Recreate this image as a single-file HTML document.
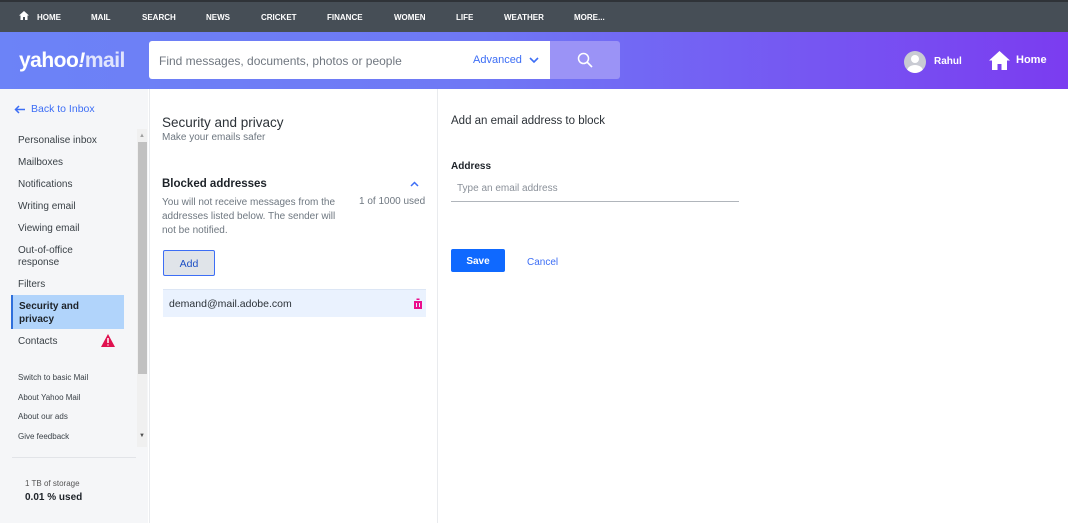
<!DOCTYPE html>
<html><head><style>
*{margin:0;padding:0;box-sizing:border-box}
body{width:1068px;height:523px;overflow:hidden;font-family:"Liberation Sans",sans-serif;background:#fff;position:relative;color:#232a31}
.top{position:absolute;left:0;top:0;width:1068px;height:32px;background:#464e56;border-top:2px solid #2f3338}
.top span{position:absolute;top:11px;color:#fff;font-size:8px;font-weight:bold}
.hdr{position:absolute;left:0;top:32px;width:1068px;height:57px;background:linear-gradient(90deg,#6c83f7 0%,#6f78f5 45%,#7b3cf0 100%)}
.abs{position:absolute}
.side{position:absolute;left:0;top:89px;width:148px;height:434px;background:#f5f6f8}
.side .it{position:absolute;left:18px;font-size:10px;color:#3a4147}
.side .sm{position:absolute;left:18px;font-size:8px;color:#3a4147}
.mid{position:absolute;left:149px;top:89px;width:289px;height:434px;border-left:1px solid #e9ebee;border-right:1px solid #e9ebee;background:#fff}
</style></head><body>
<div class="top">
<svg class="abs" style="left:19px;top:9px" width="10" height="9" viewBox="0 0 10 9"><path d="M5 0L0 4.5h1.5V9h2.5V6h2v3h2.5V4.5H10z" fill="#fff"/></svg>
<span style="left:37px">HOME</span><span style="left:91px">MAIL</span><span style="left:142px">SEARCH</span><span style="left:206px">NEWS</span><span style="left:261px">CRICKET</span><span style="left:327px">FINANCE</span><span style="left:394px">WOMEN</span><span style="left:456px">LIFE</span><span style="left:504px">WEATHER</span><span style="left:574px">MORE...</span>
</div>
<div class="hdr">
<div class="abs" style="left:19px;top:17px;color:#fff;font-size:21px;font-weight:bold;letter-spacing:-0.5px">yahoo<span style="font-style:italic">!</span><span style="opacity:.8">mail</span></div>
<div class="abs" style="left:149px;top:9px;width:401px;height:38px;background:#fff;border-radius:3px 0 0 3px"></div>
<div class="abs" style="left:159px;top:22px;font-size:12px;color:#707780">Find messages, documents, photos or people</div>
<div class="abs" style="left:473px;top:22px;font-size:11px;color:#3d6ef5">Advanced</div>
<svg class="abs" style="left:529px;top:25px" width="10" height="7"><path d="M1 1l4 4 4-4" stroke="#3d6ef5" stroke-width="1.6" fill="none"/></svg>
<div class="abs" style="left:550px;top:9px;width:70px;height:38px;background:#9b93f6;border-radius:0 3px 3px 0"></div>
<svg class="abs" style="left:577px;top:20px" width="16" height="17"><circle cx="6.5" cy="6.5" r="5" stroke="#fff" stroke-width="1.5" fill="none"/><path d="M10 10l5 5" stroke="#fff" stroke-width="1.6"/></svg>
<div class="abs" style="left:904px;top:19px;width:22px;height:22px;border-radius:50%;background:#c9cbd3;overflow:hidden"><div style="position:absolute;left:7px;top:4px;width:8px;height:8px;border-radius:50%;background:#fff"></div><div style="position:absolute;left:3px;top:14px;width:16px;height:12px;border-radius:50%;background:#fff"></div></div>
<div class="abs" style="left:934px;top:24px;color:#fff;font-size:10px;font-weight:bold">Rahul</div>
<svg class="abs" style="left:989px;top:19px" width="21" height="19" viewBox="0 0 21 19"><path d="M10.5 0L0 9.5h3V19h5.5v-6h4v6H18V9.5h3z" fill="#fff"/></svg>
<div class="abs" style="left:1016px;top:22px;color:#fff;font-size:11px;font-weight:bold">Home</div>
</div>
<div class="side">
<svg class="abs" style="left:14px;top:16px" width="11" height="9"><path d="M5 1L1.5 4.5 5 8M1.5 4.5H11" stroke="#3d6ef5" stroke-width="1.5" fill="none"/></svg>
<div class="abs" style="left:31px;top:14px;font-size:10.5px;color:#3d6ef5">Back to Inbox</div>
<div class="it" style="top:46px">Personalise inbox</div>
<div class="it" style="top:68px">Mailboxes</div>
<div class="it" style="top:90px">Notifications</div>
<div class="it" style="top:112px">Writing email</div>
<div class="it" style="top:134px">Viewing email</div>
<div class="it" style="top:156px;line-height:12px">Out-of-office<br>response</div>
<div class="it" style="top:190px">Filters</div>
<div class="abs" style="left:11px;top:206px;width:113px;height:34px;background:#b1d4fb;border-left:2px solid #2f6fdb"></div>
<div class="it" style="top:211px;left:19px;font-weight:bold;color:#1d2228;line-height:13px">Security and<br>privacy</div>
<div class="it" style="top:247px">Contacts</div>
<svg class="abs" style="left:101px;top:245px" width="14" height="13"><path d="M7 0L14 13H0z" fill="#e0114f"/><path d="M7 4v5M7 10.5v1" stroke="#fff" stroke-width="1.5"/></svg>
<div class="sm" style="top:284px">Switch to basic Mail</div>
<div class="sm" style="top:304px">About Yahoo Mail</div>
<div class="sm" style="top:323px">About our ads</div>
<div class="sm" style="top:343px">Give feedback</div>
<div class="abs" style="left:137px;top:40px;width:10px;height:318px;background:#f0f0f0"></div>
<div class="abs" style="left:138px;top:53px;width:9px;height:232px;background:#c1c1c1"></div>
<div class="abs" style="left:139px;top:44px;font-size:6px;color:#a0a0a0">▲</div>
<div class="abs" style="left:139px;top:344px;font-size:6px;color:#505050">▼</div>
<div class="abs" style="left:12px;top:368px;width:124px;height:1px;background:#e2e4e8"></div>
<div class="abs" style="left:25px;top:390px;font-size:8px;color:#555">1 TB of storage</div>
<div class="abs" style="left:25px;top:403px;font-size:10px;font-weight:bold;color:#1d2228">0.01 % used</div>
</div>
<div class="mid">
<div class="abs" style="left:12px;top:26px;font-size:13.5px;color:#2c3238">Security and privacy</div>
<div class="abs" style="left:12px;top:43px;font-size:10px;color:#6e7780">Make your emails safer</div>
<div class="abs" style="left:12px;top:89px;font-size:11.5px;font-weight:bold;color:#1d2228">Blocked addresses</div>
<svg class="abs" style="left:260px;top:92px" width="9" height="6"><path d="M1 5l3.5-3.5L8 5" stroke="#3d6ef5" stroke-width="1.5" fill="none"/></svg>
<div class="abs" style="left:12px;top:107px;font-size:10px;color:#6e7780;line-height:14px;width:182px">You will not receive messages from the addresses listed below. The sender will not be notified.</div>
<div class="abs" style="left:209px;top:107px;font-size:10px;color:#6e7780">1 of 1000 used</div>
<div class="abs" style="left:13px;top:161px;width:52px;height:26px;background:#e0e4e9;border:1px solid #3d6ef5;border-radius:2px;font-size:10.5px;color:#1d4fc4;text-align:center;line-height:26px">Add</div>
<div class="abs" style="left:13px;top:200px;width:263px;height:28px;background:#eaf2fe;border-top:1px solid #dce6f5"></div>
<div class="abs" style="left:19px;top:209px;font-size:10.5px;color:#2c3238">demand@mail.adobe.com</div>
<svg class="abs" style="left:263px;top:209px" width="10" height="11"><path d="M0 2h10M3.5 2V0.5h3V2M1 3h8v8H1z" fill="#eb0f8c"/><path d="M3.5 5v4M6.5 5v4" stroke="#eaf2fe" stroke-width="1"/></svg>
</div>
<div class="abs" style="left:451px;top:115px;font-size:11.5px;color:#2c3238">Add an email address to block</div>
<div class="abs" style="left:451px;top:161px;font-size:10px;font-weight:bold;color:#1d2228">Address</div>
<div class="abs" style="left:457px;top:183px;font-size:10px;color:#8a9099">Type an email address</div>
<div class="abs" style="left:451px;top:201px;width:288px;height:1px;background:#b0b5bb"></div>
<div class="abs" style="left:451px;top:249px;width:54px;height:23px;background:#0f69ff;border-radius:2px;color:#fff;font-size:10px;font-weight:bold;text-align:center;line-height:25px">Save</div>
<div class="abs" style="left:527px;top:257px;font-size:10px;color:#3d6ef5">Cancel</div>
</body></html>
